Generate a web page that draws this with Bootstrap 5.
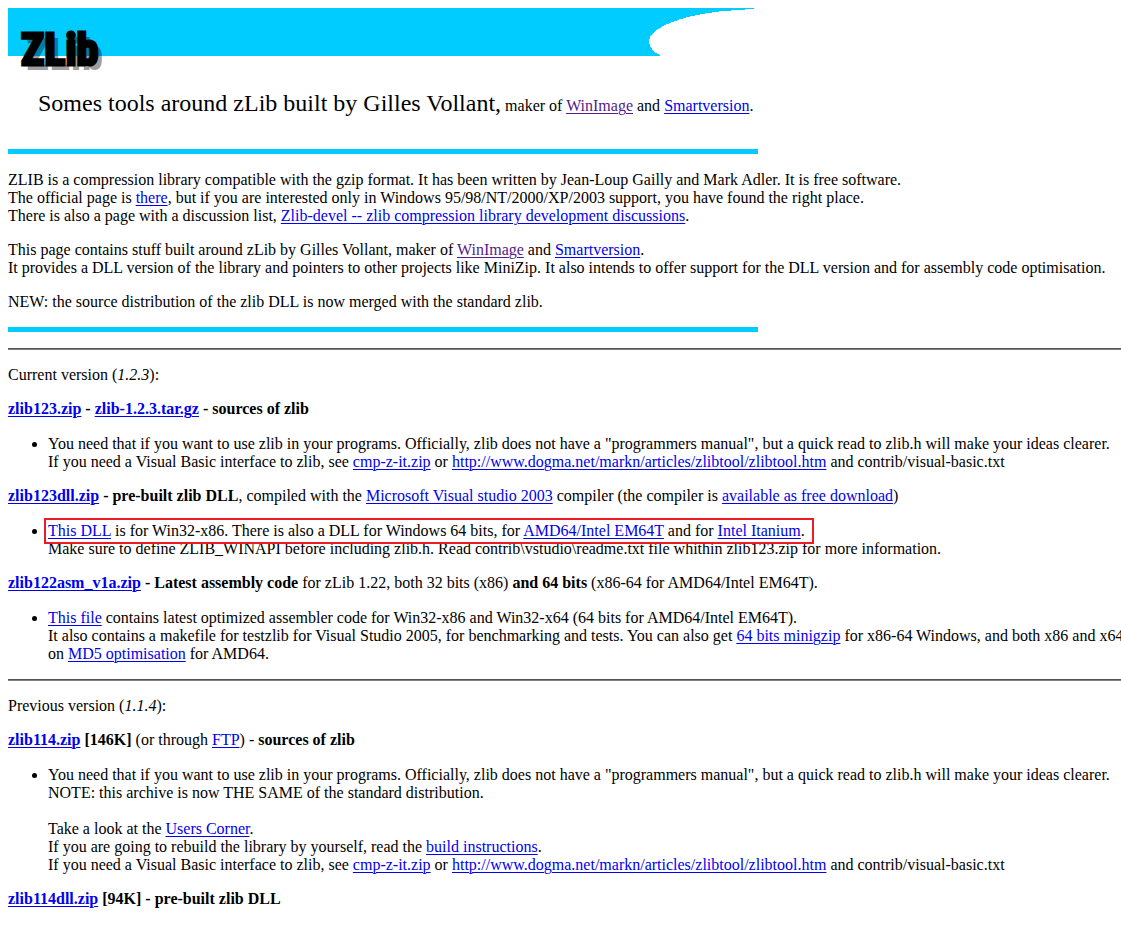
<!DOCTYPE html>
<html lang="en">
<head>
<meta charset="utf-8">
<meta name="viewport" content="width=device-width, initial-scale=1">
<title>ZLib</title>
<link href="https://cdn.jsdelivr.net/npm/bootstrap@5.3.0/dist/css/bootstrap.min.css" rel="stylesheet">
<style>
body { font: 16px/18px "Liberation Serif", "Times New Roman", serif; color: #000; background: #fff; }
a { color: #00e; text-underline-offset: 2px; text-decoration-thickness: 1px; }
a:hover { color: #00e; }
a.visited-page { color: #551a8b; }
.page { padding: 8px 0 16px 8px; overflow: hidden; white-space: nowrap; }
.band { max-width: 750px; }
.banner { height: 48px; }
.logo { position: absolute; left: 13px; top: 16px; font: bold 44px/52px Impact, "Roboto Condensed", "Open Sans Condensed", "Liberation Sans Narrow", "DejaVu Sans Condensed", sans-serif; -webkit-text-stroke: 3px #000; text-shadow: 5px 5px 0 rgba(0, 0, 0, .4); }
.tagline { padding: 33px 0 29px 30px; line-height: 29px; }
.tagline .title { font-size: 24px; }
.bar { height: 5px; background: #0cf; }
.intro { padding-top: 17px; }
.page p { margin-bottom: 16px; }
.page ul { margin: 17px 0 16px; padding-left: 40px; }
.rule { margin: 16px 0; border: 0; height: 2px; opacity: 1; background: linear-gradient(#555 50%, #808080 50%); }
.marked { position: relative; z-index: 1; display: inline-block; }
.marked::before { content: ""; position: absolute; z-index: -1; inset: -4px -9px -4px -4px; border: 2px solid #ed1c24; background: #fff; }
</style>
</head>
<body>
<main class="page">
  <header>
    <div class="banner band position-relative">
      <svg class="d-block w-100 h-100" viewBox="0 0 750 48" preserveAspectRatio="none" aria-hidden="true" shape-rendering="crispEdges">
        <path fill="#00ccff" d="M0 0H746V1C722 2 700 4 680 9C657 15 641 24 641 33C641 39 645 44 653 48H0Z"/>
      </svg>
      <span class="logo">ZLib</span>
    </div>
    <div class="tagline"><span class="title">Somes tools around zLib built by Gilles Vollant,</span> maker of <a href="#" class="visited-page">WinImage</a> and <a href="#">Smartversion</a>.</div>
    <div class="bar band"></div>
  </header>

  <section class="intro">
    <p>ZLIB is a compression library compatible with the gzip format. It has been written by Jean-Loup Gailly and Mark Adler. It is free software.<br>
    The official page is <a href="#">there</a>, but if you are interested only in Windows 95/98/NT/2000/XP/2003 support, you have found the right place.<br>
    There is also a page with a discussion list, <a href="#">Zlib-devel -- zlib compression library development discussions</a>.</p>
    <p>This page contains stuff built around zLib by Gilles Vollant, maker of <a href="#" class="visited-page">WinImage</a> and <a href="#">Smartversion</a>.<br>
    It provides a DLL version of the library and pointers to other projects like MiniZip. It also intends to offer support for the DLL version and for assembly code optimisation.</p>
    <p>NEW: the source distribution of the zlib DLL is now merged with the standard zlib.</p>
    <div class="bar band"></div>
  </section>

  <hr class="rule">

  <section>
    <p>Current version (<i>1.2.3</i>):</p>
    <p><b><a href="#">zlib123.zip</a> - <a href="#">zlib-1.2.3.tar.gz</a> - sources of zlib</b></p>
    <ul>
      <li>You need that if you want to use zlib in your programs. Officially, zlib does not have a "programmers manual", but a quick read to zlib.h will make your ideas clearer.<br>
      If you need a Visual Basic interface to zlib, see <a href="#">cmp-z-it.zip</a> or <a href="#">http://www.dogma.net/markn/articles/zlibtool/zlibtool.htm</a> and contrib/visual-basic.txt</li>
    </ul>
    <p><b><a href="#">zlib123dll.zip</a> - pre-built zlib DLL</b>, compiled with the <a href="#">Microsoft Visual studio 2003</a> compiler (the compiler is <a href="#">available as free download</a>)</p>
    <ul>
      <li><span class="marked"><a href="#">This DLL</a> is for Win32-x86. There is also a DLL for Windows 64 bits, for <a href="#">AMD64/Intel EM64T</a> and for <a href="#">Intel Itanium</a>.</span><br>
      Make sure to define ZLIB_WINAPI before including zlib.h. Read contrib\vstudio\readme.txt file whithin zlib123.zip for more information.</li>
    </ul>
    <p><b><a href="#">zlib122asm_v1a.zip</a> - Latest assembly code</b> for zLib 1.22, both 32 bits (x86) <b>and 64 bits</b> (x86-64 for AMD64/Intel EM64T).</p>
    <ul>
      <li><a href="#">This file</a> contains latest optimized assembler code for Win32-x86 and Win32-x64 (64 bits for AMD64/Intel EM64T).<br>
      It also contains a makefile for testzlib for Visual Studio 2005, for benchmarking and tests. You can also get <a href="#">64 bits minigzip</a> for x86-64 Windows, and both x86 and x64<br>
      on <a href="#">MD5 optimisation</a> for AMD64.</li>
    </ul>
  </section>

  <hr class="rule">

  <section>
    <p>Previous version (<i>1.1.4</i>):</p>
    <p><b><a href="#">zlib114.zip</a> [146K]</b> (or through <a href="#">FTP</a>) - <b>sources of zlib</b></p>
    <ul>
      <li>You need that if you want to use zlib in your programs. Officially, zlib does not have a "programmers manual", but a quick read to zlib.h will make your ideas clearer.<br>
      NOTE: this archive is now THE SAME of the standard distribution.<br><br>
      Take a look at the <a href="#">Users Corner</a>.<br>
      If you are going to rebuild the library by yourself, read the <a href="#">build instructions</a>.<br>
      If you need a Visual Basic interface to zlib, see <a href="#">cmp-z-it.zip</a> or <a href="#">http://www.dogma.net/markn/articles/zlibtool/zlibtool.htm</a> and contrib/visual-basic.txt</li>
    </ul>
    <p class="mb-0"><b><a href="#">zlib114dll.zip</a> [94K] - pre-built zlib DLL</b></p>
  </section>
</main>
<script src="https://cdn.jsdelivr.net/npm/bootstrap@5.3.0/dist/js/bootstrap.bundle.min.js"></script>
</body>
</html>
